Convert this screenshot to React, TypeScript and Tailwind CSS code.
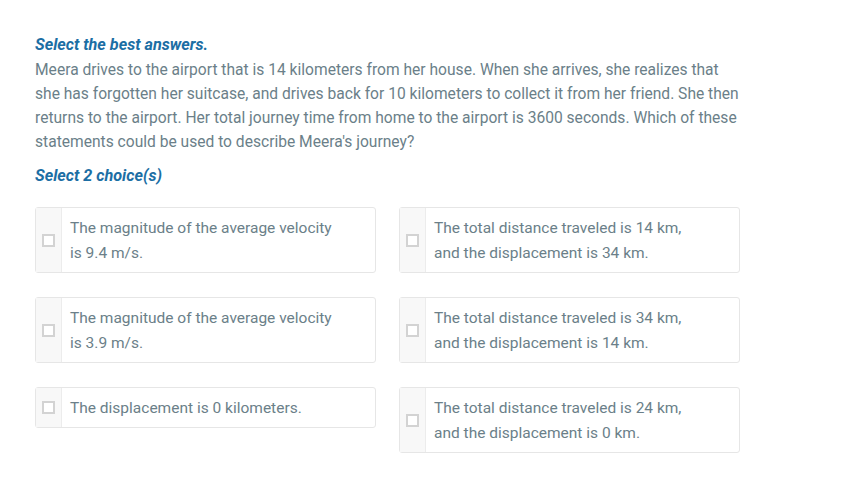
import React from 'react'

const choices = [
  ['The magnitude of the average velocity', 'is 9.4 m/s.'],
  ['The total distance traveled is 14 km,', 'and the displacement is 34 km.'],
  ['The magnitude of the average velocity', 'is 3.9 m/s.'],
  ['The total distance traveled is 34 km,', 'and the displacement is 14 km.'],
  ['The displacement is 0 kilometers.'],
  ['The total distance traveled is 24 km,', 'and the displacement is 0 km.'],
]

const question = [
  'Meera drives to the airport that is 14 kilometers from her house. When she arrives, she realizes that',
  'she has forgotten her suitcase, and drives back for 10 kilometers to collect it from her friend. She then',
  'returns to the airport. Her total journey time from home to the airport is 3600 seconds. Which of these',
  "statements could be used to describe Meera's journey?",
]

function Choice({ lines }: { lines: string[] }) {
  return (
    <div className="flex rounded-[3px] border border-[#e6e6e6] bg-white">
      <div className="flex w-[26px] shrink-0 items-center justify-center border-r border-[#ececec] bg-[#f8f8f8]">
        <span className="block h-[13px] w-[13px] border-2 border-[#d3d3d3] bg-white" />
      </div>
      <div className="whitespace-nowrap pl-[8px] pr-[8px] pt-[8px] pb-[6px] text-[15.5px] leading-[25px] text-[#6b7f89]">
        {lines.map((l, i) => (
          <div key={i}>{l}</div>
        ))}
      </div>
    </div>
  )
}

export default function App() {
  return (
    <div className="min-h-[481px] w-[857px] bg-white px-[35px] pt-[35px]" style={{ fontFamily: 'Roboto, sans-serif' }}>
      <p className="text-[16.2px] font-bold italic leading-[20px] text-[#1c6ea4]">Select the best answers.</p>
      <div className="mt-[3px] whitespace-nowrap text-[15.6px] leading-[24px] text-[#6b7f89]">
        {question.map((l, i) => (
          <div key={i}>{l}</div>
        ))}
      </div>
      <p className="mt-[12px] text-[16.2px] font-bold italic leading-[20px] text-[#1c6ea4]">Select 2 choice(s)</p>
      <div className="mt-[21px] grid w-[705px] grid-cols-2 items-start gap-x-[23px] gap-y-[24px]">
        {choices.map((c, i) => (
          <Choice key={i} lines={c} />
        ))}
      </div>
    </div>
  )
}
